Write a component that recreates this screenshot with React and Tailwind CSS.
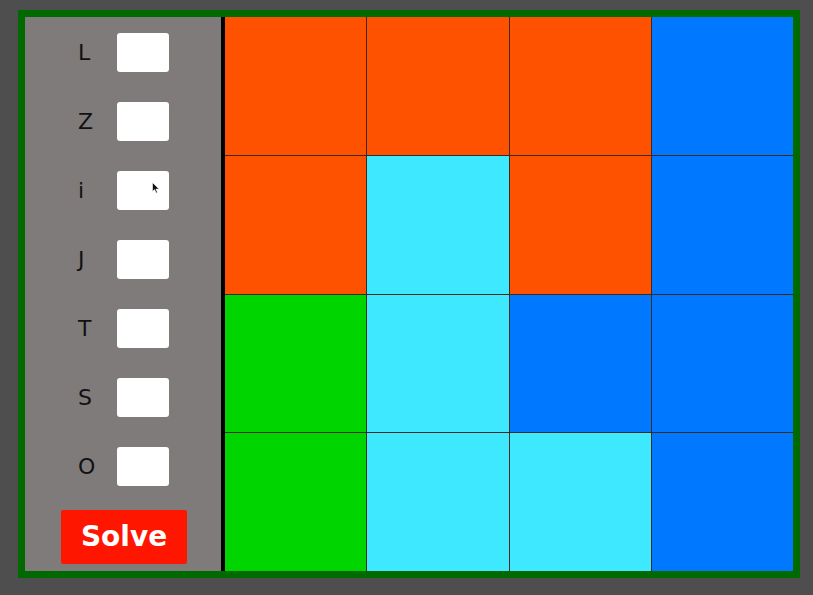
import { useState } from "react"

const pieces = ["L", "Z", "i", "J", "T", "S", "O"]

const colors = {
	o: "bg-[#ff5200]",
	b: "bg-[#0078ff]",
	c: "bg-[#3ee9ff]",
	g: "bg-[#00d500]",
}

const board = [
	["o", "o", "o", "b"],
	["o", "c", "o", "b"],
	["g", "c", "b", "b"],
	["g", "c", "c", "b"],
]

function Cursor() {
	return (
		<svg width="8" height="12" viewBox="0 0 8 12" className="absolute left-[35px] top-[11px]">
			<path d="M0.5 0.5 L0.5 9.5 L2.6 7.6 L4.1 11 L5.4 10.4 L4 7.1 L7 7.1 Z" fill="#111" stroke="#fff" strokeWidth="0.6" />
		</svg>
	)
}

export default function App() {
	const [counts, setCounts] = useState({})

	return (
		<div className="w-[813px] h-[595px] bg-[#4e4e4e] pt-[10px] pl-[18px] font-['DejaVu_Sans',sans-serif]">
			<div className="flex w-[782px] h-[568px] border-[7px] border-[#006a00]">
				<div className="flex w-[200px] flex-col bg-[#7f7b7b] border-r-[4px] border-black pt-[16px]">
					<div className="flex flex-col gap-[30px]">
						{pieces.map((p) => (
							<div key={p} className="flex h-[39px] items-center pl-[53px]">
								<span className="w-[39px] text-left text-[22px] leading-none text-[#111]">{p}</span>
								<div className="relative">
									<input
										value={counts[p] || ""}
										onChange={(e) => setCounts({ ...counts, [p]: e.target.value })}
										className="block w-[52px] h-[39px] rounded-[3px] bg-white outline-none"
									/>
									{p === "i" && <Cursor />}
								</div>
							</div>
						))}
					</div>
					<button className="mt-[24px] ml-[36px] w-[126px] h-[54px] rounded-[2px] bg-[#ff1600] text-[28px] font-bold text-white leading-none">
						Solve
					</button>
				</div>
				<div className="grid flex-1 grid-cols-4 grid-rows-4 gap-px bg-[#3a2a20]">
					{board.flat().map((c, i) => (
						<div key={i} className={colors[c]} />
					))}
				</div>
			</div>
		</div>
	)
}
